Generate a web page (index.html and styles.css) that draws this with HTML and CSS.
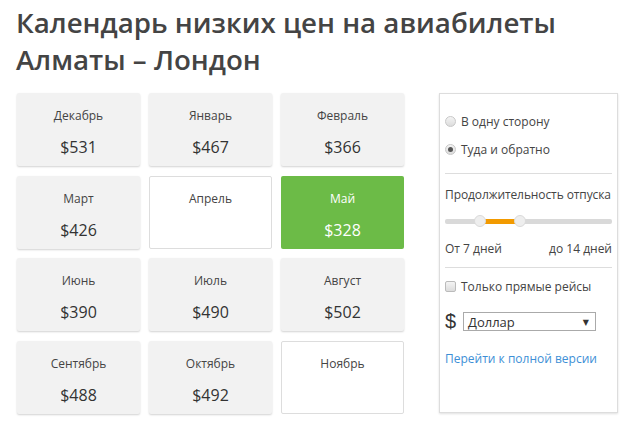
FILE: index.html
```html
<!DOCTYPE html>
<html lang="ru">
<head>
<meta charset="utf-8">
<link rel="stylesheet" href="styles.css">
</head>
<body>
<h1 class="title">Календарь низких цен на авиабилеты<br>Алматы – Лондон</h1>
<div class="main">
  <div class="grid">
    <div class="card"><div class="month">Декабрь</div><div class="price">$531</div></div>
    <div class="card"><div class="month">Январь</div><div class="price">$467</div></div>
    <div class="card"><div class="month">Февраль</div><div class="price">$366</div></div>
    <div class="card"><div class="month">Март</div><div class="price">$426</div></div>
    <div class="card empty"><div class="month">Апрель</div></div>
    <div class="card active"><div class="month">Май</div><div class="price">$328</div></div>
    <div class="card"><div class="month">Июнь</div><div class="price">$390</div></div>
    <div class="card"><div class="month">Июль</div><div class="price">$490</div></div>
    <div class="card"><div class="month">Август</div><div class="price">$502</div></div>
    <div class="card"><div class="month">Сентябрь</div><div class="price">$488</div></div>
    <div class="card"><div class="month">Октябрь</div><div class="price">$492</div></div>
    <div class="card empty"><div class="month">Ноябрь</div></div>
  </div>
  <div class="side">
    <div class="opt"><span class="radio"></span>В одну сторону</div>
    <div class="opt"><span class="radio on"></span>Туда и обратно</div>
    <div class="sep"></div>
    <div class="label">Продолжительность отпуска</div>
    <div class="slider">
      <span class="fill"></span>
      <span class="knob k1"></span>
      <span class="knob k2"></span>
    </div>
    <div class="range"><span>От 7 дней</span><span>до 14 дней</span></div>
    <div class="sep sep2"></div>
    <div class="opt chk"><span class="box"></span>Только прямые рейсы</div>
    <div class="cur"><span class="dollar">$</span><div class="select"><span>Доллар</span><span class="arr">▼</span></div></div>
    <a class="link" href="#">Перейти к полной версии</a>
  </div>
</div>
</body>
</html>
```
FILE: styles.css
```css
html, body { margin: 0; padding: 0; background: #fff; }
body {
  font-family: "Open Sans", "DejaVu Sans", sans-serif;
  color: #444;
  width: 640px;
  height: 434px;
  overflow: hidden;
}
.title {
  margin: 0;
  padding: 4px 0 0 16px;
  font-size: 27.7px;
  font-weight: 600;
  line-height: 37px;
  color: #444;
}
.main {
  display: flex;
  padding: 15px 0 0 17px;
  gap: 35px;
}
.grid {
  display: grid;
  grid-template-columns: repeat(3, 123px);
  grid-auto-rows: 73px;
  column-gap: 9px;
  row-gap: 9.5px;
  align-content: start;
}
.card {
  box-sizing: border-box;
  background: #f2f2f2;
  border-radius: 2px;
  box-shadow: 0 1px 2px rgba(0,0,0,0.18);
  text-align: center;
  padding-top: 14px;
}
.card.empty {
  background: #fff;
  border: 1px solid #ddd;
  box-shadow: none;
  padding-top: 13px;
}
.card.active {
  background: #6cbb47;
  box-shadow: none;
}
.month {
  font-size: 12px;
  line-height: 18px;
  color: #444;
}
.price {
  margin-top: 10px;
  font-size: 16px;
  line-height: 24px;
  color: #333;
}
.active .month, .active .price { color: #fff; }
.side {
  box-sizing: border-box;
  width: 179px;
  height: 320px;
  border: 1px solid #ddd;
  box-shadow: 0 1px 2px rgba(0,0,0,0.12);
  padding: 17px 5px 0 5px;
  font-size: 12px;
  color: #444;
}
.opt {
  display: flex;
  align-items: center;
  height: 20px;
  margin-bottom: 8px;
  white-space: nowrap;
}
.radio {
  width: 11px;
  height: 11px;
  box-sizing: border-box;
  border-radius: 50%;
  border: 1px solid #c8c8c8;
  background: linear-gradient(#f4f4f4, #dcdcdc);
  margin-right: 5px;
  position: relative;
}
.radio.on::after {
  content: "";
  position: absolute;
  left: 2px; top: 2px;
  width: 5px; height: 5px;
  border-radius: 50%;
  background: #555;
}
.sep {
  height: 1px;
  background: #ddd;
  margin: 14px 0 11px 0;
}
.label {
  line-height: 20px;
  white-space: nowrap;
  letter-spacing: -0.1px;
}
.slider {
  position: relative;
  height: 5px;
  background: #d9d9d9;
  border-radius: 2px;
  margin: 14px 0 0 0;
}
.fill {
  position: absolute;
  left: 40px;
  width: 34px;
  top: 0;
  height: 5px;
  background: #f29a00;
}
.knob {
  position: absolute;
  top: -4px;
  width: 12px;
  height: 12px;
  box-sizing: border-box;
  border-radius: 50%;
  background: #eee;
  border: 1px solid #dadada;
}
.k1 { left: 29px; }
.k2 { left: 69px; }
.range {
  display: flex;
  justify-content: space-between;
  line-height: 20px;
  margin-top: 14.5px;
}
.sep2 { margin: 8px 0 9px 0; }
.chk { margin-bottom: 15px; }
.box {
  width: 11px;
  height: 11px;
  box-sizing: border-box;
  border: 1px solid #bbb;
  border-radius: 2px;
  background: linear-gradient(#f4f4f4, #dcdcdc);
  margin-right: 5px;
}
.cur {
  display: flex;
  align-items: center;
  height: 20px;
}
.dollar {
  font-size: 20px;
  color: #333;
  width: 18px;
  font-family: "Liberation Sans", Arial, sans-serif;
}
.select {
  box-sizing: border-box;
  width: 133px;
  height: 19px;
  border: 1px solid #aaa;
  display: flex;
  align-items: center;
  justify-content: space-between;
  padding: 0 6px 0 4px;
  font-size: 13px;
  color: #333;
}
.arr { font-size: 8px; color: #333; }
.link {
  display: block;
  margin-top: 17px;
  color: #3d8fd6;
  text-decoration: none;
  font-size: 12px;
  line-height: 20px;
}
```
